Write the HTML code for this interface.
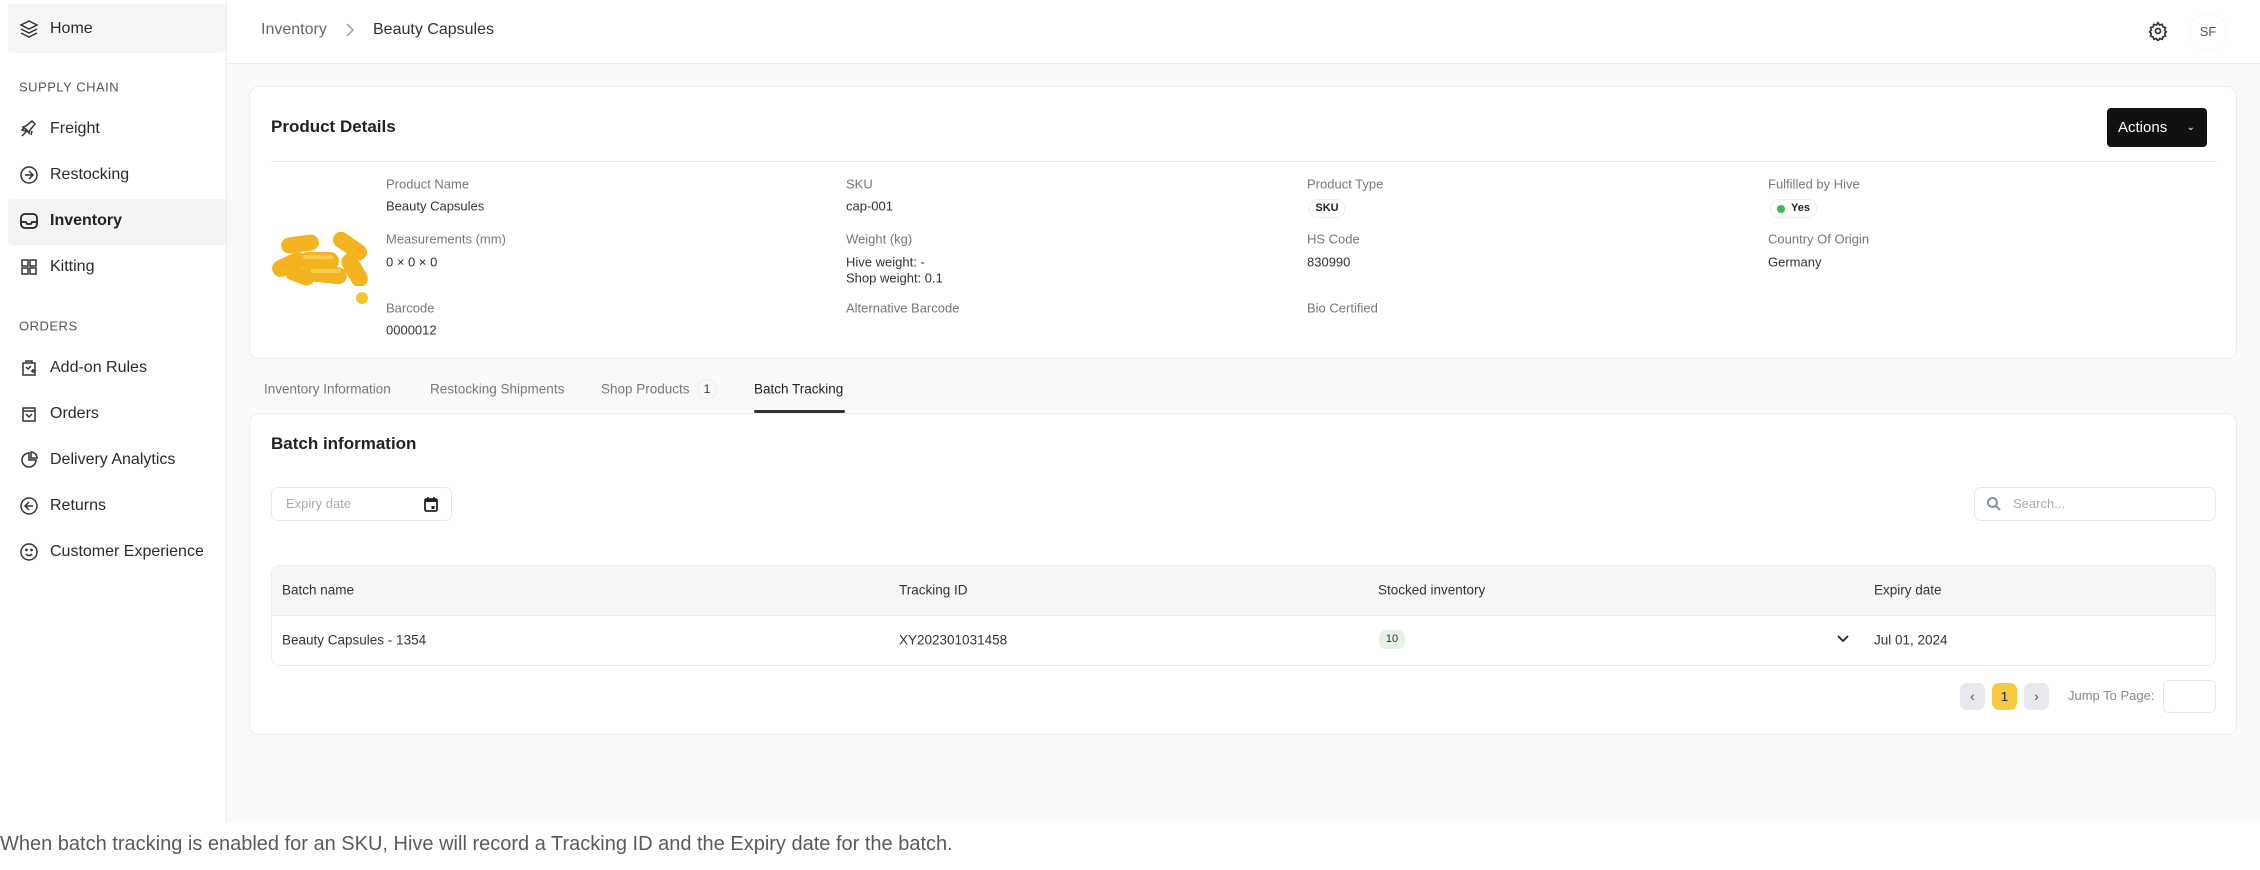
<!DOCTYPE html>
<html><head><meta charset="utf-8"><style>
*{box-sizing:border-box;margin:0;padding:0}
body{width:2260px;height:870px;background:#fff;font-family:"Liberation Sans",sans-serif;color:#222;position:relative;overflow:hidden}
.a{position:absolute;white-space:nowrap}
.side{position:absolute;left:0;top:0;width:227px;height:823px;background:#fff;border-right:1px solid #ececec}
.main{position:absolute;left:227px;top:0;width:2033px;height:823px;background:#fafafa}
.nav{position:absolute;left:50px;font-size:16px;color:#2a2a2a;transform:translateY(-50%)}
.ic{position:absolute;left:19px;width:20px;height:20px;transform:translateY(-50%)}
.sec{position:absolute;left:19px;font-size:13px;color:#555;letter-spacing:.5px;transform:translateY(-50%)}
.card{position:absolute;left:249px;width:1988px;background:#fff;border:1px solid #ececf0;border-radius:10px}
.lb{position:absolute;font-size:13px;color:#777;transform:translateY(-50%)}
.vl{position:absolute;font-size:13px;color:#333;transform:translateY(-50%)}
.tab{position:absolute;top:389px;font-size:13.5px;color:#777;transform:translateY(-50%)}
.th{position:absolute;top:590px;font-size:13.5px;color:#333;transform:translateY(-50%)}
.td{position:absolute;top:640px;font-size:13.5px;color:#333;transform:translateY(-50%)}
</style></head><body>
<div class="side">
  <div class="a" style="left:8px;top:4px;width:218px;height:49px;background:#f6f6f6;border-radius:4px"></div>
  <svg class="ic" style="top:29px" viewBox="0 0 20 20" fill="none" stroke="#333" stroke-width="1.5"><path d="M10 2l8 4-8 4-8-4z"/><path d="M2 10l8 4 8-4M2 14l8 4 8-4"/></svg>
  <div class="nav" style="top:29px">Home</div>
  <div class="sec" style="top:87px">SUPPLY CHAIN</div>
  <svg class="ic" style="top:129px" viewBox="0 0 20 20" fill="none" stroke="#333" stroke-width="1.5"><path d="M3 17l5-5M4 8l3-1 6-5 3 3-5 6-1 3-2-3z M7 12l-4-1 2-2M12 16l1-4"/></svg>
  <div class="nav" style="top:129px">Freight</div>
  <svg class="ic" style="top:175px" viewBox="0 0 20 20" fill="none" stroke="#333" stroke-width="1.5"><circle cx="10" cy="10" r="8"/><path d="M6 10h8M10 6l4 4-4 4"/></svg>
  <div class="nav" style="top:175px">Restocking</div>
  <div class="a" style="left:8px;top:199px;width:218px;height:46px;background:#f4f4f4;border-radius:4px"></div>
  <svg class="ic" style="top:221px" viewBox="0 0 20 20" fill="none" stroke="#222" stroke-width="1.8"><rect x="2" y="3" width="16" height="14" rx="4"/><path d="M2 11h5l1 2h4l1-2h5"/></svg>
  <div class="nav" style="top:221px;font-weight:bold;color:#222">Inventory</div>
  <svg class="ic" style="top:267px" viewBox="0 0 20 20" fill="none" stroke="#333" stroke-width="1.5"><rect x="3" y="3" width="6" height="6"/><rect x="11" y="3" width="6" height="6"/><rect x="3" y="11" width="6" height="6"/><rect x="11" y="11" width="6" height="6"/></svg>
  <div class="nav" style="top:267px">Kitting</div>
  <div class="sec" style="top:326px">ORDERS</div>
  <svg class="ic" style="top:368px" viewBox="0 0 20 20" fill="none" stroke="#333" stroke-width="1.5"><path d="M4 5h12v12H4zM7 5V3h6v2M7 9l2 2 3-3M14 11v4M12 13h4"/></svg>
  <div class="nav" style="top:368px">Add-on Rules</div>
  <svg class="ic" style="top:414px" viewBox="0 0 20 20" fill="none" stroke="#333" stroke-width="1.5"><path d="M4 4h12v13H4zM4 7h12M7 10l3 3 3-3"/></svg>
  <div class="nav" style="top:414px">Orders</div>
  <svg class="ic" style="top:460px" viewBox="0 0 20 20" fill="none" stroke="#333" stroke-width="1.5"><path d="M10 3a7 7 0 1 0 7 7h-7z"/><path d="M12 2a6 6 0 0 1 6 6h-6z"/></svg>
  <div class="nav" style="top:460px">Delivery Analytics</div>
  <svg class="ic" style="top:506px" viewBox="0 0 20 20" fill="none" stroke="#333" stroke-width="1.5"><circle cx="10" cy="10" r="8"/><path d="M14 10H6M10 6l-4 4 4 4"/></svg>
  <div class="nav" style="top:506px">Returns</div>
  <svg class="ic" style="top:552px" viewBox="0 0 20 20" fill="none" stroke="#333" stroke-width="1.5"><circle cx="10" cy="10" r="8"/><path d="M7 12c1.5 2 4.5 2 6 0"/><circle cx="7.5" cy="8" r=".6"/><circle cx="12.5" cy="8" r=".6"/></svg>
  <div class="nav" style="top:552px">Customer Experience</div>
</div>
<div class="main"></div>
<div class="a" style="left:227px;top:0;width:2033px;height:64px;background:#fff;border-bottom:1px solid #ececec"></div>
<div class="a" style="left:261px;top:21px;font-size:16px;color:#666">Inventory</div>
<svg class="a" style="left:344px;top:22px" width="12" height="16" viewBox="0 0 12 16" fill="none" stroke="#999" stroke-width="1.4"><path d="M3 2l6 6-6 6"/></svg>
<div class="a" style="left:373px;top:21px;font-size:16px;color:#333">Beauty Capsules</div>
<svg class="a" style="left:2148px;top:21px" width="20" height="20" viewBox="0 0 24 24" fill="none" stroke="#333" stroke-width="2"><circle cx="12" cy="12" r="3"/><path d="M12 2l2 3 3-1 1 3 3 1-1 3 2 2-2 2 1 3-3 1-1 3-3-1-2 3-2-3-3 1-1-3-3-1 1-3-2-2 2-2-1-3 3-1 1-3 3 1z"/></svg>
<div class="a" style="left:2190px;top:14px;width:36px;height:36px;border-radius:50%;background:#fff;box-shadow:0 0 3px #eee;font-size:13px;color:#555;text-align:center;line-height:36px">SF</div>

<div class="card" style="top:86px;height:273px"></div>
<div class="a" style="left:271px;top:117px;font-size:17px;font-weight:bold;color:#222">Product Details</div>
<div class="a" style="left:2107px;top:108px;width:100px;height:39px;background:#111;border-radius:4px;color:#fff;font-size:15px;line-height:39px;padding-left:11px">Actions<span style="position:absolute;right:12px;font-size:10px">&#8964;</span></div>
<div class="a" style="left:271px;top:161px;width:1946px;height:1px;background:#ececf0"></div>
<svg class="a" style="left:271px;top:232px" width="102" height="54" viewBox="0 0 102 54">
<g fill="#f3b420">
<rect x="10" y="4" width="38" height="16" rx="8" transform="rotate(-8 29 12)"/>
<rect x="60" y="6" width="38" height="16" rx="8" transform="rotate(35 79 14)"/>
<rect x="0" y="24" width="36" height="17" rx="8.5" transform="rotate(-25 18 32)"/>
<rect x="28" y="20" width="40" height="18" rx="9"/>
<rect x="36" y="34" width="40" height="17" rx="8.5" transform="rotate(6 56 42)"/>
<rect x="66" y="30" width="36" height="17" rx="8.5" transform="rotate(60 84 38)"/>
<rect x="14" y="36" width="30" height="15" rx="7.5" transform="rotate(20 29 43)"/>
</g>
<g fill="#ffd866" opacity=".7"><rect x="32" y="23" width="30" height="4" rx="2"/><rect x="40" y="37" width="30" height="4" rx="2"/></g>
</svg>
<div class="a" style="left:356px;top:292px;width:12px;height:12px;border-radius:50%;background:#f5c431"></div>
<div class="lb" style="left:386px;top:184px">Product Name</div><div class="vl" style="left:386px;top:206px">Beauty Capsules</div>
<div class="lb" style="left:386px;top:239px">Measurements (mm)</div><div class="vl" style="left:386px;top:262px">0 × 0 × 0</div>
<div class="lb" style="left:386px;top:308px">Barcode</div><div class="vl" style="left:386px;top:330px">0000012</div>
<div class="lb" style="left:846px;top:184px">SKU</div><div class="vl" style="left:846px;top:206px">cap-001</div>
<div class="lb" style="left:846px;top:239px">Weight (kg)</div><div class="vl" style="left:846px;top:262px">Hive weight: -</div><div class="vl" style="left:846px;top:278px">Shop weight: 0.1</div>
<div class="lb" style="left:846px;top:308px">Alternative Barcode</div>
<div class="lb" style="left:1307px;top:184px">Product Type</div>
<div class="a" style="left:1309px;top:199px;width:36px;height:19px;border:1px solid #eee;border-radius:9px;font-size:11px;font-weight:bold;text-align:center;line-height:17px">SKU</div>
<div class="lb" style="left:1307px;top:239px">HS Code</div><div class="vl" style="left:1307px;top:262px">830990</div>
<div class="lb" style="left:1307px;top:308px">Bio Certified</div>
<div class="lb" style="left:1768px;top:184px">Fulfilled by Hive</div>
<div class="a" style="left:1770px;top:199px;width:47px;height:19px;border:1px solid #eee;border-radius:9px;font-size:11px;font-weight:bold;line-height:17px;padding-left:20px">Yes<span style="position:absolute;left:6px;top:5px;width:8px;height:8px;border-radius:50%;background:#3cb75a"></span></div>
<div class="lb" style="left:1768px;top:239px">Country Of Origin</div><div class="vl" style="left:1768px;top:262px">Germany</div>

<div class="tab" style="left:264px">Inventory Information</div>
<div class="tab" style="left:430px">Restocking Shipments</div>
<div class="tab" style="left:601px">Shop Products</div>
<div class="a" style="left:697px;top:379px;width:20px;height:20px;border:1px solid #eee;border-radius:10px;font-size:12px;text-align:center;line-height:18px;color:#333">1</div>
<div class="tab" style="left:754px;color:#222">Batch Tracking</div>
<div class="a" style="left:754px;top:410px;width:91px;height:3px;background:#333;border-radius:2px"></div>

<div class="card" style="top:413px;height:322px"></div>
<div class="a" style="left:271px;top:434px;font-size:17px;font-weight:bold;color:#222">Batch information</div>
<div class="a" style="left:271px;top:487px;width:181px;height:34px;border:1px solid #e8e8ec;border-radius:7px;font-size:13px;color:#aaa;line-height:32px;padding-left:14px">Expiry date
<svg style="position:absolute;right:13px;top:8px" width="14" height="16" viewBox="0 0 14 16"><rect x="1" y="3" width="12" height="12" rx="1.5" fill="none" stroke="#222" stroke-width="1.8"/><rect x="1" y="3" width="12" height="3" fill="#222"/><path d="M4 1v3M10 1v3" stroke="#222" stroke-width="1.6"/><rect x="7.5" y="10" width="3" height="3" fill="#222"/></svg></div>
<div class="a" style="left:1974px;top:487px;width:242px;height:34px;border:1px solid #e8e8ec;border-radius:7px;font-size:13px;color:#aaa;line-height:32px;padding-left:38px">Search...
<svg style="position:absolute;left:11px;top:8px" width="16" height="16" viewBox="0 0 16 16" fill="none" stroke="#8890a8" stroke-width="2"><circle cx="6.5" cy="6.5" r="4.5"/><path d="M10 10l4 4"/></svg></div>
<div class="a" style="left:271px;top:565px;width:1945px;height:101px;border:1px solid #ececf0;border-radius:8px;overflow:hidden;background:#fff"><div style="height:50px;background:#f7f7f9;border-bottom:1px solid #ececf0"></div></div>
<div class="th" style="left:282px">Batch name</div>
<div class="th" style="left:899px">Tracking ID</div>
<div class="th" style="left:1378px">Stocked inventory</div>
<div class="th" style="left:1874px">Expiry date</div>
<div class="td" style="left:282px">Beauty Capsules - 1354</div>
<div class="td" style="left:899px">XY202301031458</div>
<div class="a" style="left:1379px;top:630px;width:26px;height:19px;background:#e3f3e6;border-radius:7px;font-size:11px;text-align:center;line-height:19px;color:#333">10</div>
<svg class="a" style="left:1836px;top:634px" width="14" height="10" viewBox="0 0 14 10" fill="none" stroke="#222" stroke-width="1.8"><path d="M2 2l5 5 5-5"/></svg>
<div class="td" style="left:1874px">Jul 01, 2024</div>
<div class="a" style="left:1960px;top:683px;width:25px;height:27px;background:#e8e9ee;border-radius:7px;text-align:center;line-height:27px;font-size:14px;color:#555">&#8249;</div>
<div class="a" style="left:1992px;top:683px;width:25px;height:27px;background:#f6c943;border-radius:7px;text-align:center;line-height:27px;font-size:13px;color:#222">1</div>
<div class="a" style="left:2024px;top:683px;width:25px;height:27px;background:#e8e9ee;border-radius:7px;text-align:center;line-height:27px;font-size:14px;color:#555">&#8250;</div>
<div class="a" style="left:2068px;top:688px;font-size:13px;color:#888">Jump To Page:</div>
<div class="a" style="left:2163px;top:680px;width:53px;height:33px;border:1px solid #e8e8ec;border-radius:6px;background:#fff"></div>

<div class="a" style="left:0;top:833px;font-size:20px;color:#5a5a5a">When batch tracking is enabled for an SKU, Hive will record a Tracking ID and the Expiry date for the batch.</div>
</body></html>
